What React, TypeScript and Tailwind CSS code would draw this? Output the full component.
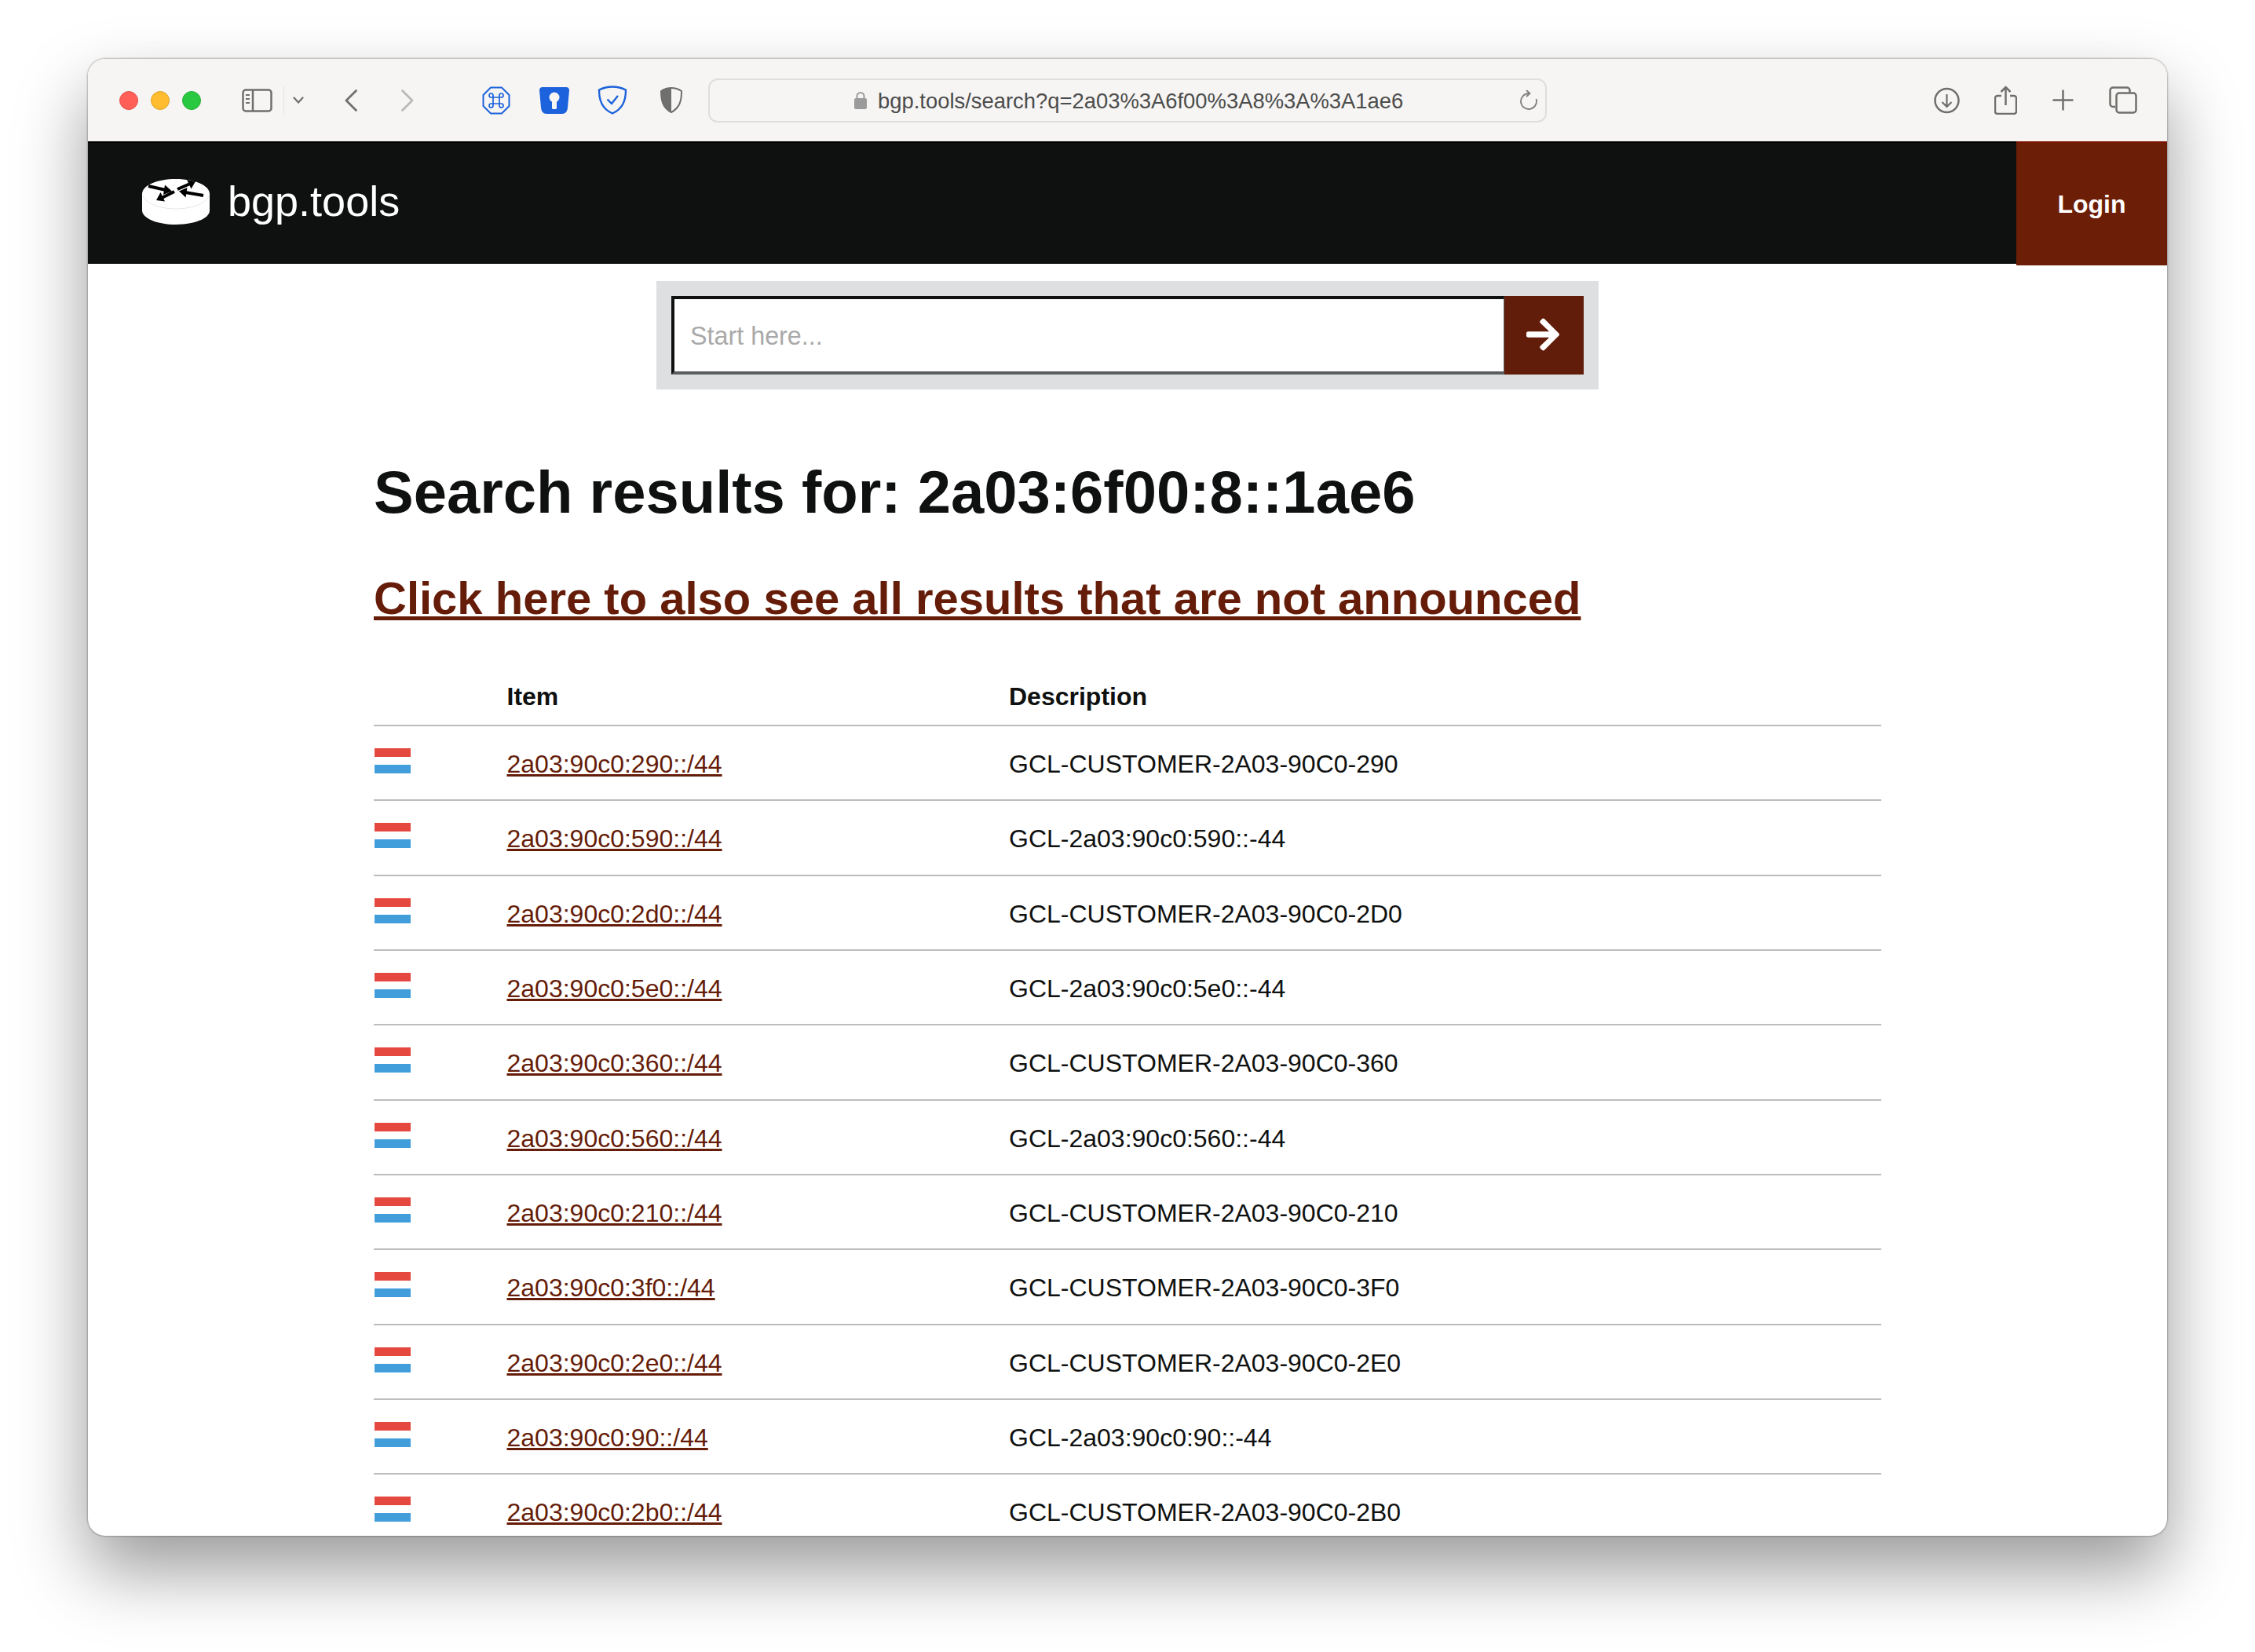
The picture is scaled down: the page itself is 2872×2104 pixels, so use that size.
import { FaArrowRight } from "react-icons/fa";

const rows = [
  ["2a03:90c0:290::/44", "GCL-CUSTOMER-2A03-90C0-290"],
  ["2a03:90c0:590::/44", "GCL-2a03:90c0:590::-44"],
  ["2a03:90c0:2d0::/44", "GCL-CUSTOMER-2A03-90C0-2D0"],
  ["2a03:90c0:5e0::/44", "GCL-2a03:90c0:5e0::-44"],
  ["2a03:90c0:360::/44", "GCL-CUSTOMER-2A03-90C0-360"],
  ["2a03:90c0:560::/44", "GCL-2a03:90c0:560::-44"],
  ["2a03:90c0:210::/44", "GCL-CUSTOMER-2A03-90C0-210"],
  ["2a03:90c0:3f0::/44", "GCL-CUSTOMER-2A03-90C0-3F0"],
  ["2a03:90c0:2e0::/44", "GCL-CUSTOMER-2A03-90C0-2E0"],
  ["2a03:90c0:90::/44", "GCL-2a03:90c0:90::-44"],
  ["2a03:90c0:2b0::/44", "GCL-CUSTOMER-2A03-90C0-2B0"],
];

function RouterLogo() {
  return (
    <svg viewBox="0 0 86 58" className="h-[58px] w-[86px]">
      <path d="M0 19C0 8 19 0 43 0s43 8 43 19v21c0 10-19 18-43 18S0 50 0 40z" fill="#fff" />
      <path d="M1 22c4 9 22 16 42 16s38-7 42-16" fill="none" stroke="#d4d4d4" strokeWidth="0.6" />
      <g stroke="#000" strokeWidth="4" fill="none">
        <path d="M8 9l22 5" />
        <path d="M45 13l16-7" />
        <path d="M41 16l-16 8" />
        <path d="M78 21l-23-4" />
      </g>
      <g fill="#000">
        <polygon points="38,15.5 27,20 29,7.500" />
        <polygon points="68,3 62.500,12.500 57,1" />
        <polygon points="18,27 29,28.500 23.500,17" />
        <polygon points="47,15.5 57.500,11 55.500,23.500" />
      </g>
    </svg>
  );
}

function Flag() {
  return (
    <div className="ml-px flex h-[32px] w-[46px] flex-col justify-between">
      <div className="h-[11px] bg-[#e4483e]" />
      <div className="h-[11px] bg-[#419edb]" />
    </div>
  );
}

function Toolbar() {
  return (
    <div className="flex h-[105px] items-center bg-[#f6f5f3] pl-[40px] text-[#6f6f6d]">
      <div className="flex gap-[16px]">
        <div className="h-[24px] w-[24px] rounded-full border border-[#e5524c] bg-[#ff5f57]" />
        <div className="h-[24px] w-[24px] rounded-full border border-[#dda42a] bg-[#febc2e]" />
        <div className="h-[24px] w-[24px] rounded-full border border-[#27ae37] bg-[#28c840]" />
      </div>
      <svg viewBox="0 0 39 30" className="ml-[52px] h-[30px] w-[39px]" fill="none" stroke="currentColor" strokeWidth="2.5">
        <rect x="1.5" y="1.5" width="36" height="27" rx="3.5" />
        <path d="M14 2v26" />
        <path d="M5 8h5M5 13h5M5 18h5" strokeWidth="2" />
      </svg>
      <div className="ml-[14px] h-[36px] w-px bg-[#e2e1df]" />
      <svg viewBox="0 0 14 9" className="ml-[11px] h-[9px] w-[14px]" fill="none" stroke="currentColor" strokeWidth="2.2" strokeLinecap="round">
        <path d="M1.5 1.5L7 7.5l5.5-6" />
      </svg>
      <svg viewBox="0 0 16 28" className="ml-[52px] h-[28px] w-[16px]" fill="none" stroke="currentColor" strokeWidth="2.8" strokeLinecap="round" strokeLinejoin="round">
        <path d="M14.5 1.5L2 14l12.5 12.5" />
      </svg>
      <svg viewBox="0 0 16 28" className="ml-[56px] h-[28px] w-[16px]" fill="none" stroke="#b9b9b7" strokeWidth="2.8" strokeLinecap="round" strokeLinejoin="round">
        <path d="M1.5 1.5L14 14 1.5 26.5" />
      </svg>
      <svg viewBox="0 0 36 36" className="ml-[87px] h-[36px] w-[36px]" fill="none" stroke="#1c62dc" strokeWidth="2">
        <path d="M11 1.5h14L34.5 11v14L25 34.5H11L1.5 25V11z" />
        <path d="M14 14h8v8h-8zM14 14h-2.500a2.500 2.500 0 1 1 2.500-2.500zM22 14v-2.500a2.500 2.500 0 1 1 2.500 2.500zM22 22h2.500a2.500 2.500 0 1 1-2.500 2.500zM14 22v2.500a2.500 2.500 0 1 1-2.500-2.500z" strokeWidth="1.7" />
      </svg>
      <svg viewBox="0 0 38 34" className="ml-[37px] h-[34px] w-[38px]">
        <path d="M4 0h30c2.500 0 4 1.500 4 4l-2 22c-.4 5-3 8-7 8H9c-4 0-6.600-3-7-8L0 4c0-2.500 1.500-4 4-4z" fill="#1c62dc" />
        <circle cx="19" cy="13" r="6.500" fill="#f6f5f3" />
        <rect x="16" y="14" width="6" height="14" rx="1.500" fill="#f6f5f3" />
      </svg>
      <svg viewBox="0 0 38 37" className="ml-[36px] h-[37px] w-[38px]" fill="none" stroke="#1c62dc">
        <path d="M19 1.500C13 1.500 7 3 2 5.500c0 14 4 24 17 30 13-6 17-16 17-30C31 3 25 1.500 19 1.500z" strokeWidth="2.400" />
        <path d="M12.500 17.500l5.500 5.500 8-10" strokeWidth="2.400" />
      </svg>
      <svg viewBox="0 0 28 33" className="ml-[42px] h-[33px] w-[28px]">
        <path d="M14 1C9 1 4 3 1 5c0 12 2 21 13 27 11-6 13-15 13-27-3-2-8-4-13-4z" fill="none" stroke="#6f6f6d" strokeWidth="2" />
        <path d="M14 1C9 1 4 3 1 5c0 12 2 21 13 27z" fill="#6f6f6d" />
      </svg>
      <div className="relative ml-[33px] flex h-[56px] w-[1068px] items-center rounded-[12px] border-2 border-[#dfdedc] pl-[184px]">
        <svg viewBox="0 0 16 23" className="h-[23px] w-[16px]">
          <path d="M3.500 10V6.500a4.500 4.500 0 0 1 9 0V10" fill="none" stroke="#9b9b9b" strokeWidth="2" />
          <rect x="0" y="9" width="16" height="14" rx="2" fill="#9b9b9b" />
        </svg>
        <span className="ml-[14px] mt-[2px] text-[27.4px] text-[#4c4c4c]">bgp.tools/search?q=2a03%3A6f00%3A8%3A%3A1ae6</span>
        <svg viewBox="0 0 24 26" className="absolute right-[9px] top-[12px] h-[26px] w-[24px]" fill="none" stroke="#7f7f7d" strokeWidth="1.800">
          <path d="M12 5a10 10 0 1 0 9.500 7" />
          <path d="M9 1l4.500 4L9 9" />
        </svg>
      </div>
      <svg viewBox="0 0 33 34" className="ml-[493px] h-[34px] w-[33px]" fill="none" stroke="currentColor" strokeWidth="2.500">
        <circle cx="16.500" cy="17" r="15" />
        <path d="M16.500 9v16M10.500 19l6 6 6-6" strokeWidth="2.200" />
      </svg>
      <svg viewBox="0 0 29 37" className="ml-[44px] h-[37px] w-[29px]" fill="none" stroke="currentColor" strokeWidth="2.500">
        <path d="M9 13H4a3 3 0 0 0-3 3v17a3 3 0 0 0 3 3h21a3 3 0 0 0 3-3V16a3 3 0 0 0-3-3h-5" />
        <path d="M14.500 25V2M8.500 8l6-6 6 6" />
      </svg>
      <svg viewBox="0 0 27 27" className="ml-[45px] h-[27px] w-[27px]" fill="none" stroke="currentColor" strokeWidth="2.500" strokeLinecap="round">
        <path d="M13.500 1.500v24M1.500 13.500h24" />
      </svg>
      <svg viewBox="0 0 36 35" className="ml-[45px] h-[35px] w-[36px]" fill="none" stroke="currentColor" strokeWidth="2.500">
        <path d="M8 26H5a3.500 3.500 0 0 1-3.500-3.500V5A3.500 3.500 0 0 1 5 1.500h18A3.500 3.500 0 0 1 26.500 5v3" />
        <rect x="9.500" y="8.500" width="25" height="25" rx="3.500" />
      </svg>
    </div>
  );
}

export default function App() {
  return (
    <div className="h-[2104px] w-[2872px] overflow-hidden bg-white pl-[112px] pt-[75px] font-['Liberation_Sans',Arial,sans-serif] text-[32px] text-[#0f1110]">
      <div className="h-[1881px] w-[2648px] overflow-hidden rounded-[22px] bg-white shadow-[0_44px_90px_0_rgba(0,0,0,0.4),0_0_2px_1px_rgba(0,0,0,0.25)]">
        <Toolbar />

        <header className="relative flex h-[156px] items-center justify-between border-t-2 border-black bg-[#0f1110] pl-[69px]">
          <div className="mb-[5px] flex items-center gap-[23px]">
            <RouterLogo />
            <span className="-mt-[2px] text-[54px] leading-none text-white">bgp.tools</span>
          </div>
          <a className="-mt-[2px] flex h-[158px] w-[192px] items-center justify-center self-start border-t-2 border-[#7c1303] bg-[#6d1e06] font-bold text-white">
            Login
          </a>
        </header>

        <main className="flex flex-col items-start pl-[364px]">
          <div className="ml-[360px] mt-[22px] flex h-[138px] w-[1200px] items-center justify-center bg-[#dedfe1]">
            <input
              placeholder="Start here..."
              className="h-[100px] w-[1061px] border-b-4 border-l-4 border-r border-t-4 border-b-[#5a5e5e] border-l-[#0f1110] border-r-[#5a5e5e] border-t-[#0f1110] bg-white pl-[20px] pt-[3px] text-[32.300px] placeholder:text-[#a9a9a9] focus:outline-none"
            />
            <button className="flex h-[100px] w-[101px] items-center justify-center bg-[#621c0a] pb-[2px] pr-[3px] text-white">
              <FaArrowRight className="h-[48px] w-[42px]" />
            </button>
          </div>

          <h1 className="mt-[83px] text-[76px] font-bold leading-[96px]">Search results for: 2a03:6f00:8::1ae6</h1>
          <a className="mt-[51px] text-[58px] font-bold leading-[72px] text-[#651c08] underline">
            Click here to also see all results that are not announced
          </a>

          <div className="mt-[69px] w-[1920px]">
            <div className="grid grid-cols-[169.500px_639.500px_1fr] border-b-2 border-[#bdbdbd] pb-[16px] font-bold leading-[40px]">
              <div />
              <div>Item</div>
              <div>Description</div>
            </div>
            {rows.map(([item, description]) => (
              <div key={item} className="grid h-[95.33px] grid-cols-[169.500px_639.500px_1fr] items-center border-b-2 border-[#bdbdbd] leading-[40px]">
                <div className="-mt-[5px]">
                  <Flag />
                </div>
                <div className="mt-[3px]">
                  <a className="text-[#651c08] underline">{item}</a>
                </div>
                <div className="mt-[3px]">{description}</div>
              </div>
            ))}
          </div>
        </main>
      </div>
    </div>
  );
}
